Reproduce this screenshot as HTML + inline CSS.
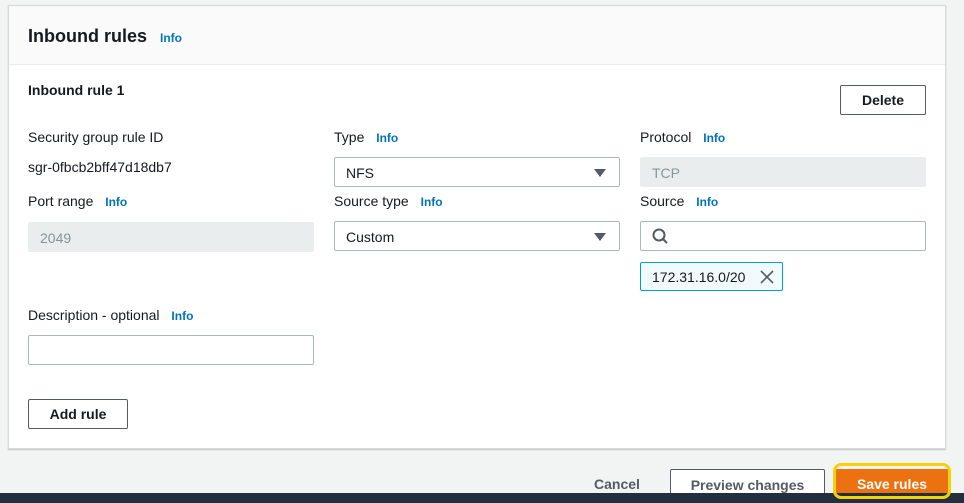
<!DOCTYPE html>
<html><head><style>
*{box-sizing:border-box;margin:0;padding:0}
body{width:964px;height:503px;overflow:hidden;background:#f2f3f3;font-family:"Liberation Sans",sans-serif;color:#16191f;position:relative;font-size:14px}
.a{position:absolute}
.panel{left:8px;top:5px;width:938px;height:444px;background:#fff;border:1px solid #d5dbdb;box-shadow:0 1px 1px rgba(0,0,0,.2)}
.hdr{left:9px;top:6px;width:936px;height:59px;background:#fafafa;border-bottom:1px solid #eaeded}
.info{color:#0073bb;font-weight:bold;font-size:12px}
.lbl{font-size:14px}
.inp{border:1px solid #aab7b8;border-radius:2px;background:#fff;height:30px;font-size:14px;padding:7px 11px}
.dis{background:#eaeded;border-color:#eaeded;color:#879596}
.tri{position:absolute;right:13px;top:11px;width:0;height:0;border-left:6px solid transparent;border-right:6px solid transparent;border-top:8px solid #545b64}
.btn{border:1px solid #545b64;border-radius:2px;background:#fff;font-weight:bold;color:#545b64;font-size:14px;text-align:center}
</style></head><body>
<div class="a panel"></div>
<div class="a hdr"></div>
<div class="a" style="left:28px;top:26px;font-size:18px;font-weight:bold">Inbound rules <span class="info" style="margin-left:8px">Info</span></div>
<div class="a" style="left:28px;top:82px;font-weight:bold;font-size:14px">Inbound rule 1</div>
<div class="a btn" style="left:840px;top:85px;width:86px;height:30px;line-height:28px;color:#16191f">Delete</div>

<div class="a lbl" style="left:28px;top:129px">Security group rule ID</div>
<div class="a lbl" style="left:28px;top:159px">sgr-0fbcb2bff47d18db7</div>
<div class="a lbl" style="left:334px;top:129px">Type <span class="info" style="margin-left:8px">Info</span></div>
<div class="a inp" style="left:334px;top:157px;width:286px">NFS<div class="tri"></div></div>
<div class="a lbl" style="left:640px;top:129px">Protocol <span class="info" style="margin-left:8px">Info</span></div>
<div class="a inp dis" style="left:640px;top:157px;width:286px">TCP</div>

<div class="a lbl" style="left:28px;top:193px">Port range <span class="info" style="margin-left:8px">Info</span></div>
<div class="a inp dis" style="left:28px;top:222px;width:286px">2049</div>
<div class="a lbl" style="left:334px;top:193px">Source type <span class="info" style="margin-left:8px">Info</span></div>
<div class="a inp" style="left:334px;top:221px;width:286px">Custom<div class="tri"></div></div>
<div class="a lbl" style="left:640px;top:193px">Source <span class="info" style="margin-left:8px">Info</span></div>
<div class="a inp" style="left:640px;top:221px;width:286px;padding:0">
<svg width="20" height="20" style="position:absolute;left:10px;top:5px" viewBox="0 0 20 20"><circle cx="8" cy="8" r="5.5" fill="none" stroke="#545b64" stroke-width="2"/><line x1="12" y1="12" x2="16" y2="16" stroke="#545b64" stroke-width="2"/></svg></div>
<div class="a" style="left:640px;top:262px;width:143px;height:29px;border:1px solid #00a1c9;border-radius:2px;background:#f1faff;font-size:14px;padding:6px 11px">172.31.16.0/20
<svg width="14" height="14" style="position:absolute;right:8px;top:7px" viewBox="0 0 14 14"><path d="M1 1L13 13M13 1L1 13" stroke="#545b64" stroke-width="1.6"/></svg></div>

<div class="a lbl" style="left:28px;top:307px">Description - optional <span class="info" style="margin-left:8px">Info</span></div>
<div class="a inp" style="left:28px;top:335px;width:286px"></div>
<div class="a btn" style="left:28px;top:399px;width:100px;height:30px;line-height:28px;color:#16191f">Add rule</div>

<div class="a" style="left:594px;top:476px;font-weight:bold;color:#545b64">Cancel</div>
<div class="a btn" style="left:670px;top:469px;width:155px;height:30px;padding-top:7px">Preview changes</div>
<div class="a" style="left:836px;top:469px;width:112px;height:30px;background:#ec7211;color:#fff;font-weight:bold;text-align:center;padding-top:7px">Save rules</div>
<div class="a" style="left:0;top:493px;width:964px;height:10px;background:#232f3e"></div>
<div class="a" style="left:833px;top:463px;width:118px;height:36px;border:3px solid #f2d20c;border-radius:8px"></div>
</body></html>
